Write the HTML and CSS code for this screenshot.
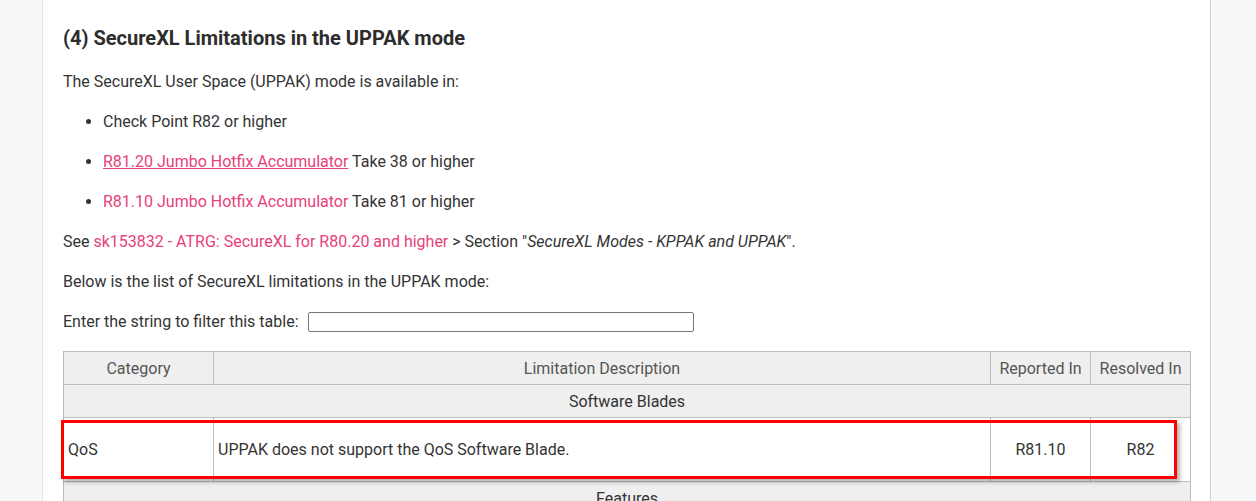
FILE: index.html
```html
<!DOCTYPE html>
<html>
<head>
<meta charset="utf-8">
<link rel="stylesheet" href="styles.css">
</head>
<body>
<div class="page">
  <main class="content">
    <h2 class="title">(4) SecureXL Limitations in the UPPAK mode</h2>
    <p class="para">The SecureXL User Space (UPPAK) mode is available in:</p>
    <ul class="list">
      <li>Check Point R82 or higher</li>
      <li><a class="link underline" href="#">R81.20 Jumbo Hotfix Accumulator</a> Take 38 or higher</li>
      <li><a class="link" href="#">R81.10 Jumbo Hotfix Accumulator</a> Take 81 or higher</li>
    </ul>
    <p class="para">See <a class="link" href="#">sk153832 - ATRG: SecureXL for R80.20 and higher</a> &gt; Section "<em>SecureXL Modes - KPPAK and UPPAK</em>".</p>
    <p class="para">Below is the list of SecureXL limitations in the UPPAK mode:</p>
    <p class="para filter">Enter the string to filter this table: <input class="filter-input" type="text"></p>
    <div class="table-wrap">
      <table class="limits">
        <colgroup>
          <col class="c-cat"><col class="c-desc"><col class="c-rep"><col class="c-res">
        </colgroup>
        <thead>
          <tr><th>Category</th><th>Limitation Description</th><th>Reported In</th><th>Resolved In</th></tr>
        </thead>
        <tbody>
          <tr class="group"><td colspan="4">Software Blades</td></tr>
          <tr class="row"><td>QoS</td><td>UPPAK does not support the QoS Software Blade.</td><td class="center">R81.10</td><td class="center">R82</td></tr>
          <tr class="group"><td colspan="4">Features</td></tr>
        </tbody>
      </table>
      <div class="highlight"></div>
    </div>
  </main>
</div>
</body>
</html>
```
FILE: styles.css
```css
html, body {
  margin: 0;
  padding: 0;
  height: 100%;
  overflow: hidden;
}
body {
  background: #f7f8fa;
  font-family: Roboto, "Liberation Sans", sans-serif;
  color: #333333;
}
.page {
  padding-left: 42px;
  width: 1169px;
  height: 100%;
}
.content {
  background: #ffffff;
  border-left: 1px solid #e2e3e6;
  border-right: 1px solid #d0d1d4;
  height: 100%;
  padding: 26px 20px 0 20px;
  box-sizing: border-box;
}
.title {
  margin: 0 0 21px 0;
  font-size: 20px;
  line-height: 24px;
  font-weight: 700;
  color: #2d2d2d;
}
.para {
  margin: 0 0 18px 0;
  font-size: 16px;
  line-height: 22px;
}
.list {
  margin: 0 0 18px 0;
  padding-left: 40px;
  font-size: 16px;
  line-height: 22px;
}
.list li {
  margin-bottom: 18px;
}
.list li:last-child {
  margin-bottom: 0;
}
.link {
  color: #e8417a;
  text-decoration: none;
}
.link.underline {
  text-decoration: underline;
}
.filter {
  display: flex;
  align-items: center;
  gap: 9px;
  margin-bottom: 18px;
}
.filter-input {
  width: 386px;
  height: 20px;
  box-sizing: border-box;
  border: 1px solid #777;
  border-radius: 2px;
  padding: 0;
  margin: 0;
}
.table-wrap {
  position: relative;
}
.limits {
  width: 1127px;
  border-collapse: collapse;
  font-size: 16px;
  table-layout: fixed;
}
.c-cat { width: 150px; }
.c-desc { width: 777px; }
.c-rep { width: 100px; }
.c-res { width: 100px; }
.limits th, .limits td {
  border: 1px solid #bdbdbd;
  padding: 0 4px;
  font-weight: 400;
}
.limits th {
  background: #efefef;
  color: #555;
  height: 32px;
  text-align: center;
}
.group td {
  background: #efefef;
  color: #333;
  height: 32px;
  text-align: center;
}
.row td {
  height: 63px;
  background: #fff;
  color: #333;
}
.row td.center {
  text-align: center;
}
.highlight {
  position: absolute;
  left: -2px;
  top: 69px;
  width: 1116px;
  height: 59px;
  border: 3px solid #ff0000;
  box-sizing: border-box;
  box-shadow: 3px 3px 4px rgba(0,0,0,0.3);
  pointer-events: none;
}
```
